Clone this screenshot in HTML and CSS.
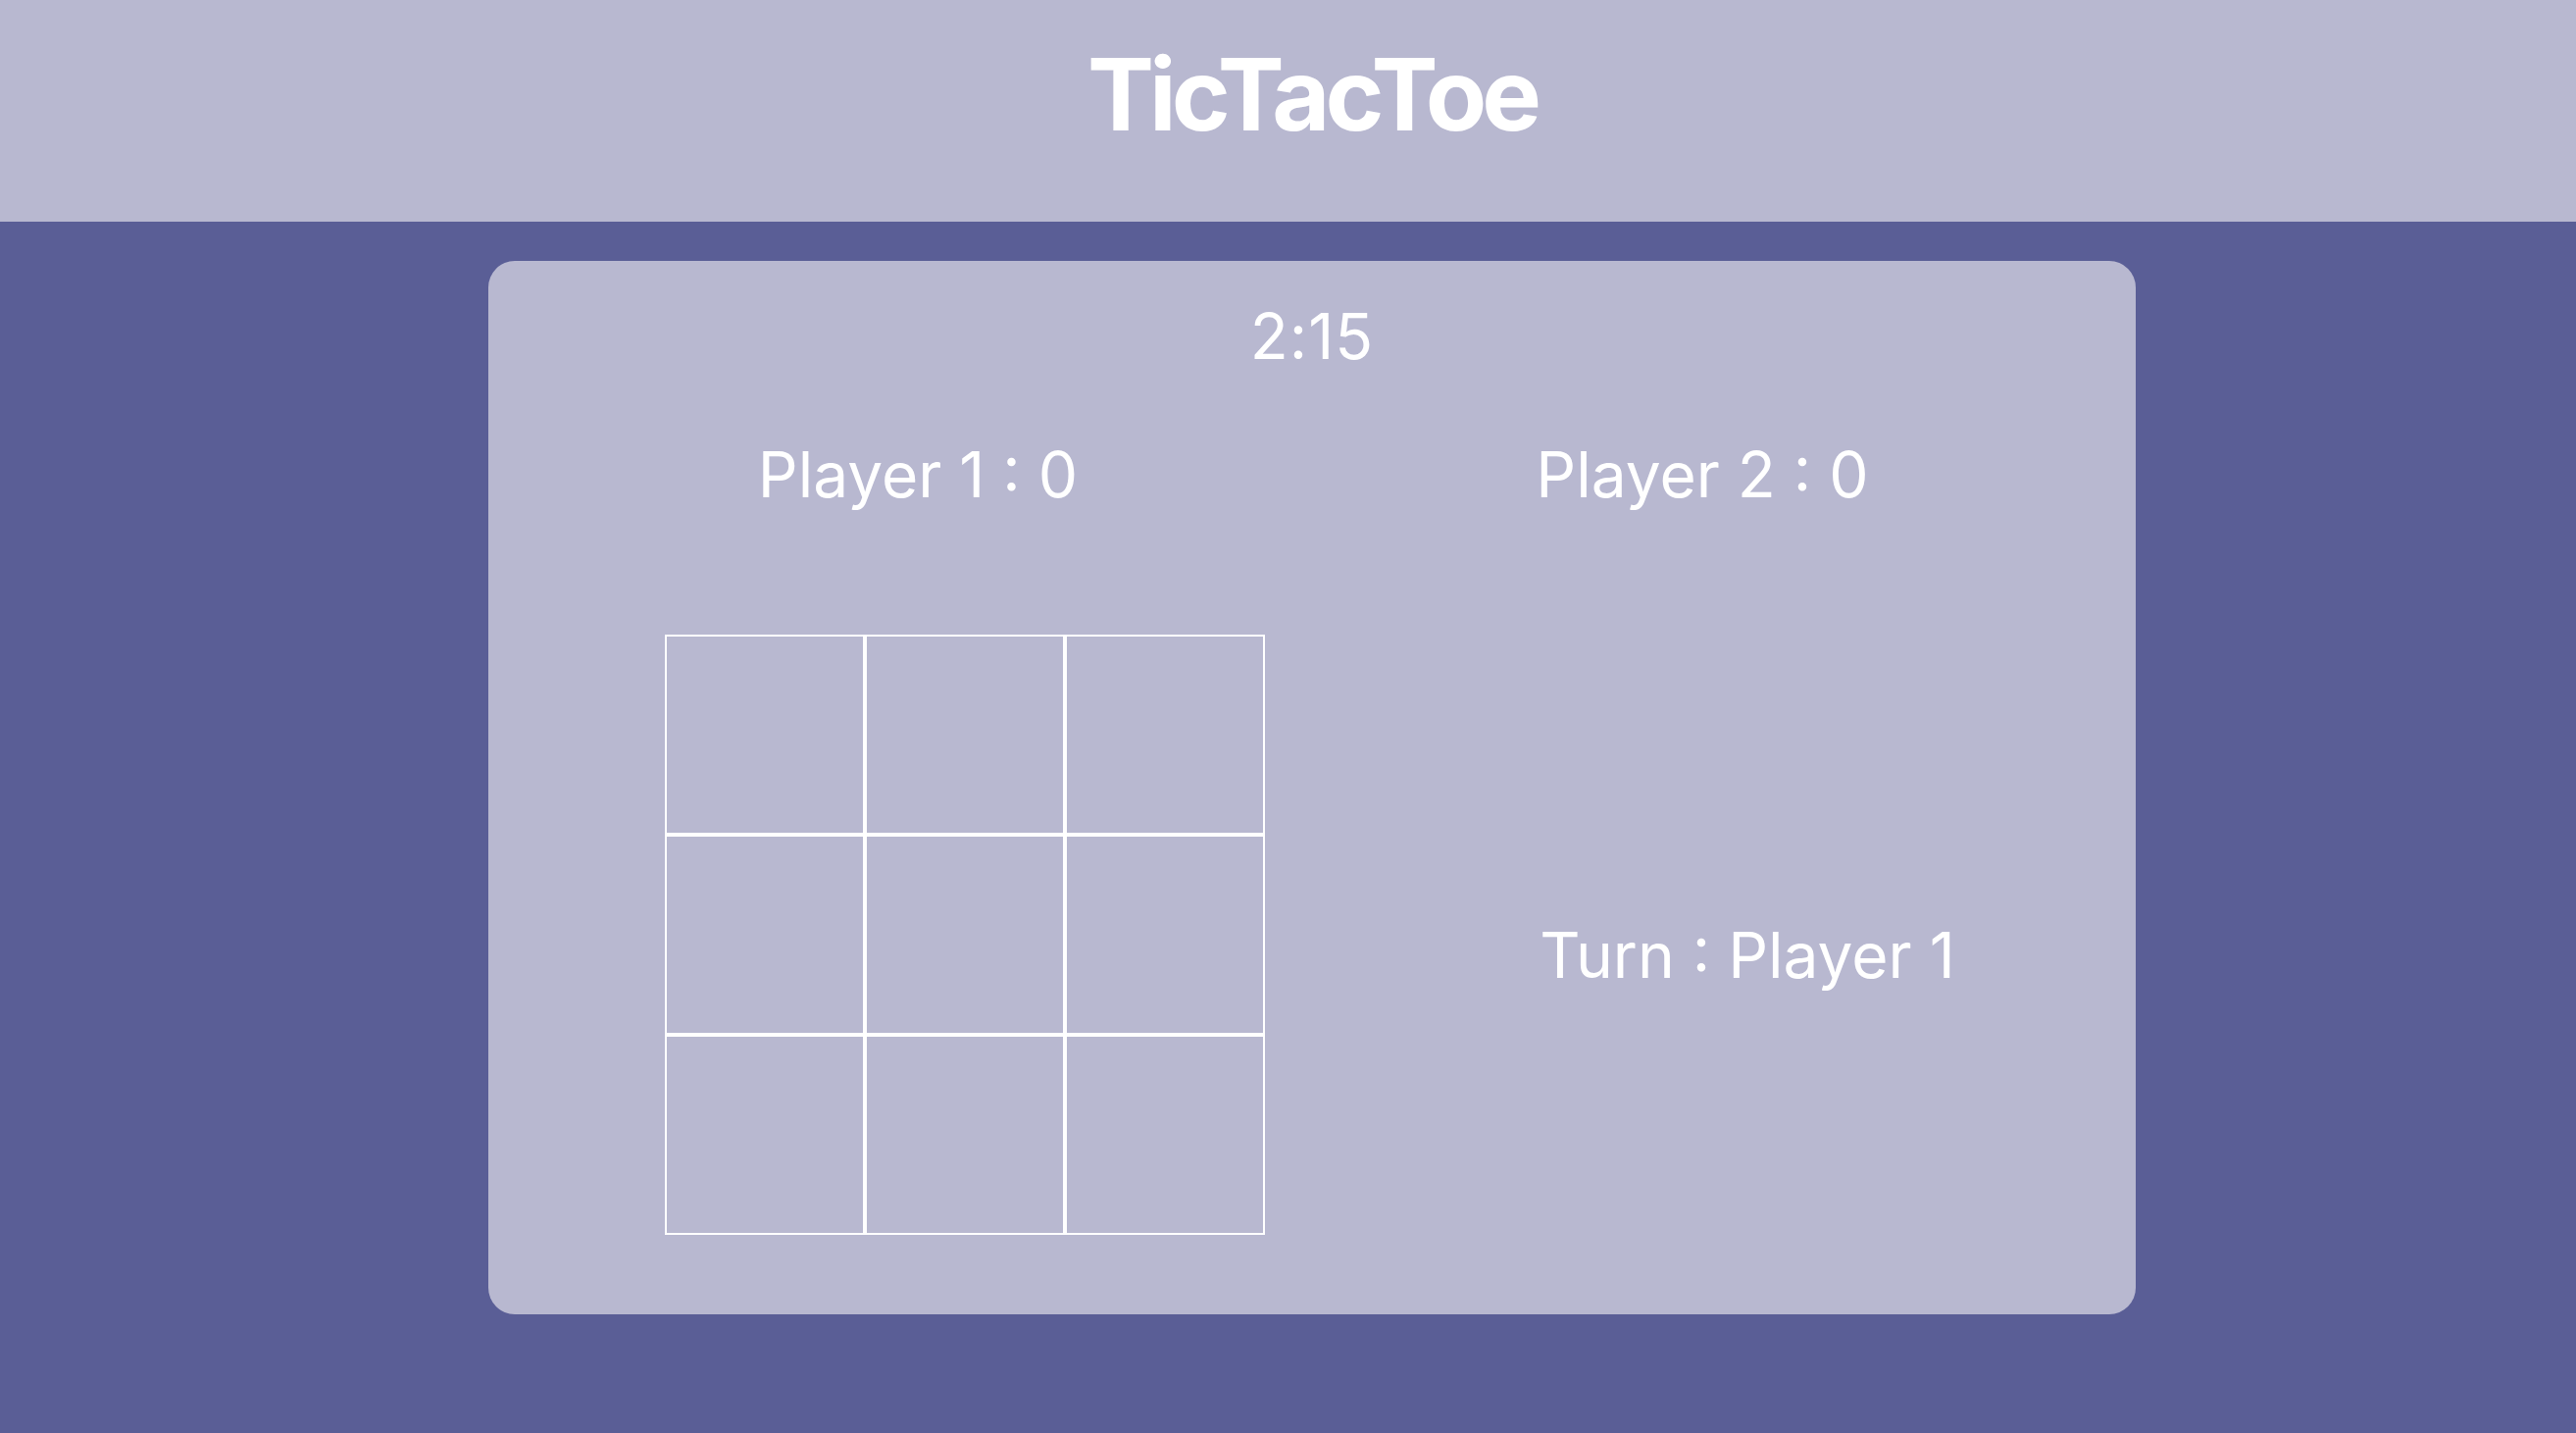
FILE: index.html
```html
<!DOCTYPE html>
<html lang="en">
<head>
<meta charset="utf-8">
<title>TicTacToe</title>
<link rel="stylesheet" href="styles.css">
</head>
<body>
<header class="topbar">
  <h1 class="title">TicTacToe</h1>
</header>
<main class="page">
  <section class="card">
    <div class="timer">2:15</div>
    <div class="scores">
      <div class="score">Player 1 : 0</div>
      <div class="score">Player 2 : 0</div>
    </div>
    <div class="play">
      <div class="board">
        <div class="cell"></div><div class="cell"></div><div class="cell"></div>
        <div class="cell"></div><div class="cell"></div><div class="cell"></div>
        <div class="cell"></div><div class="cell"></div><div class="cell"></div>
      </div>
      <div class="turn">Turn : Player 1</div>
    </div>
  </section>
</main>
</body>
</html>
```

FILE: styles.css
```css
* { box-sizing: border-box; }

html, body {
  margin: 0;
  padding: 0;
}

body {
  min-height: 1461px;
  background: #5a5e96;
  font-family: Inter, "Noto Sans", sans-serif;
  color: #ffffff;
}

.topbar {
  height: 226px;
  padding: 34px 449px 0 498px;
  background: #b8b8d0;
  text-align: center;
}

.title {
  margin: 0;
  font-size: 102px;
  font-weight: 700;
  line-height: normal;
  letter-spacing: -5px;
}

.page {
  padding: 40px 449px 0 498px;
}

.card {
  width: 1680px;
  background: #b8b8d0;
  border-radius: 27px;
  padding: 38px 0 81px;
  font-size: 64px;
  font-weight: 400;
  line-height: normal;
}

.timer {
  text-align: center;
  letter-spacing: 1px;
}

.scores {
  display: flex;
  margin-top: 64px;
  padding: 0 42px 0 38px;
}

.score {
  flex: 1;
  text-align: center;
}

.play {
  display: flex;
  align-items: center;
  margin-top: 125px;
  padding-left: 180px;
}

.board {
  display: grid;
  grid-template-columns: repeat(3, 204px);
  grid-template-rows: repeat(3, 204px);
}

.cell {
  border: 2px solid #ffffff;
}

.turn {
  flex: 1;
  text-align: center;
  padding-left: 96px;
  padding-top: 40px;
}
```
